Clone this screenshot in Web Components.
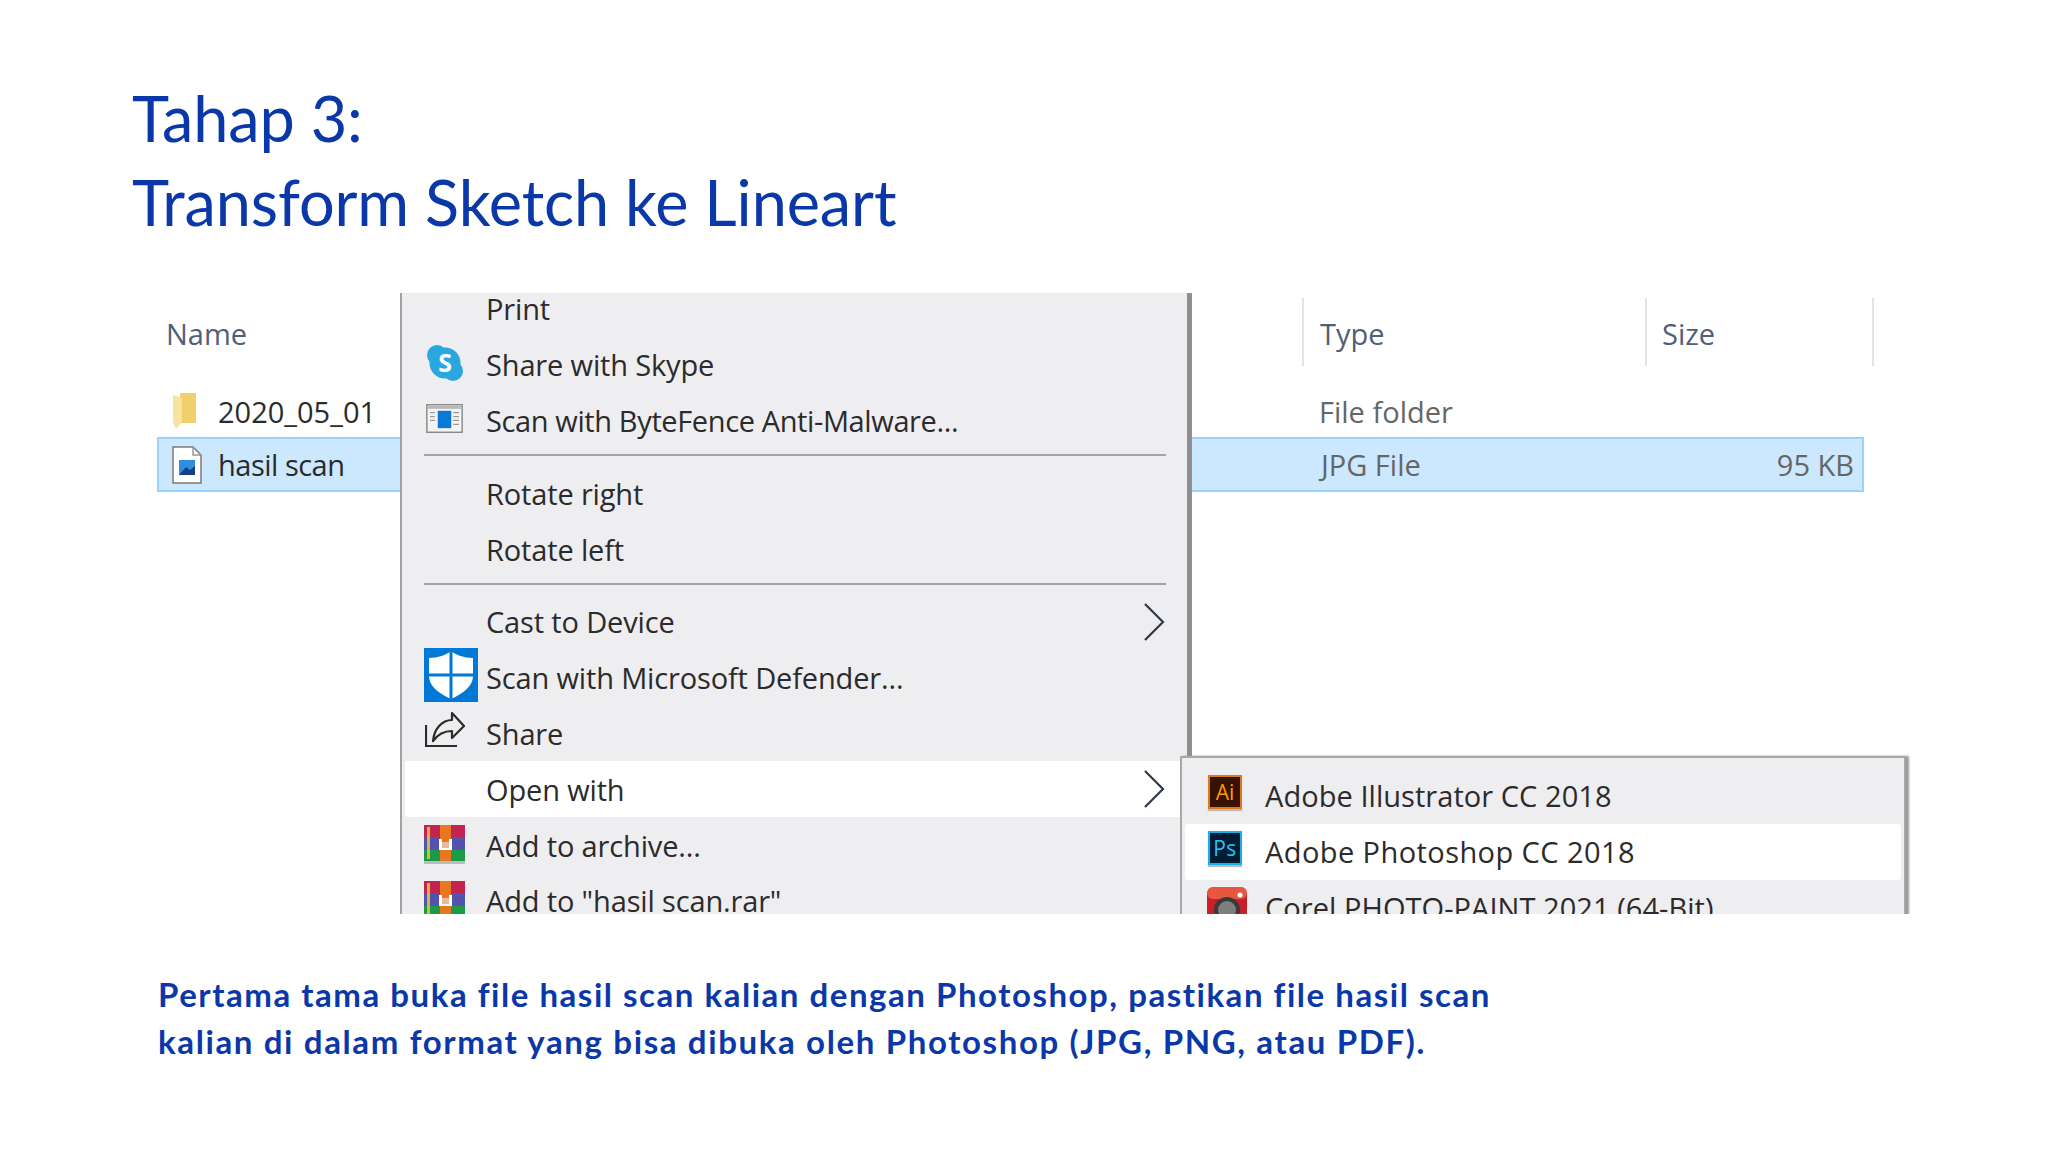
<!DOCTYPE html>
<html>
<head>
<meta charset="utf-8">
<title>Tahap 3</title>
<style>
  html, body { margin: 0; background: #fff; }
</style>
</head>
<body>
<slide-page>
  <span slot="title">Tahap 3:<br>Transform Sketch ke Lineart</span>
  <explorer-panel slot="shot">
    <context-menu>
      <menu-item>Print</menu-item>
      <menu-item icon="skype">Share with Skype</menu-item>
      <menu-item icon="bytefence" style="letter-spacing:-.38px">Scan with ByteFence Anti-Malware...</menu-item>
      <menu-sep></menu-sep>
      <menu-item>Rotate right</menu-item>
      <menu-item>Rotate left</menu-item>
      <menu-sep></menu-sep>
      <menu-item arrow>Cast to Device</menu-item>
      <menu-item icon="defender">Scan with Microsoft Defender...</menu-item>
      <menu-item icon="share">Share</menu-item>
      <menu-item arrow active>Open with</menu-item>
      <menu-item icon="rar">Add to archive...</menu-item>
      <menu-item icon="rar">Add to "hasil scan.rar"</menu-item>
    </context-menu>
    <sub-menu>
      <menu-item icon="ai" narrow>Adobe Illustrator CC 2018</menu-item>
      <menu-item icon="ps" narrow active style="letter-spacing:.42px">Adobe Photoshop CC 2018</menu-item>
      <menu-item icon="corel" narrow>Corel PHOTO-PAINT 2021 (64-Bit)</menu-item>
    </sub-menu>
  </explorer-panel>
  <span slot="body">Pertama tama buka file hasil scan kalian dengan Photoshop, pastikan file hasil scan<br><span style="letter-spacing:1.63px">kalian di dalam format yang bisa dibuka oleh Photoshop (JPG, PNG, atau PDF).</span></span>
</slide-page>

<script>
  const icons = {
    skype: `<svg style="margin:-4px 0 0 2px" width="38" height="38" viewBox="0 0 38 38"><circle cx="11" cy="11" r="10" fill="#2aa7df"/><circle cx="27" cy="27" r="10" fill="#2aa7df"/><circle cx="19" cy="19" r="15.5" fill="#2aa7df"/><text x="19" y="28" text-anchor="middle" font-family="Open Sans, sans-serif" font-weight="700" font-size="25" fill="#fff">S</text></svg>`,
    bytefence: `<svg style="margin:-4px 0 0 2px" width="37" height="29" viewBox="0 0 38 30"><rect x=".75" y=".75" width="36.5" height="28.5" fill="#f4f4f4" stroke="#8a8a8a" stroke-width="1.5"/><rect x="2" y="2" width="34" height="3" fill="#b8b8b8"/><rect x="12" y="7" width="14" height="18" fill="#0a78d6"/><path d="M4 9h5M4 13h5M4 17h5M28 9h6M28 13h6M28 17h6M28 21h6" stroke="#9a9a9a" stroke-width="1.3"/></svg>`,
    defender: `<svg style="margin:-6px 0 0 0" width="54" height="54" viewBox="0 0 54 54"><rect width="54" height="54" fill="#0078d7"/><path d="M27 3c5 4 13 7 22 7v18c0 10-9 17-22 23C14 45 5 38 5 28V10c9 0 17-3 22-7z" fill="#fff"/><path d="M27 2v50M4 27h46" stroke="#0078d7" stroke-width="3"/></svg>`,
    share: `<svg style="margin:-8px 0 0 1px" width="41" height="37" viewBox="0 0 41 37" fill="none" stroke="#2b2b2b" stroke-width="2.2"><path d="M1 14v21h31"/><path d="M8 30C9 18 17 9 27 9V2l12 13-12 12v-7c-8 0-14 3-19 10z" stroke-linejoin="round"/></svg>`,
    rar: `<svg width="41" height="40" viewBox="0 0 41 40"><rect y="36" width="41" height="3" fill="#bcbcbc"/><rect width="41" height="12" fill="#c2234f"/><rect y="12" width="41" height="13" fill="#5353ad"/><rect y="25" width="41" height="11" fill="#1d9a48"/><rect x="16" width="11" height="36" fill="#e8781f"/><rect x="3" y="2" width="3" height="32" fill="#e5c93a" opacity=".85"/><path d="M15 14h3v9h7v-9h3v11H15z" fill="#fff"/><rect x="18" y="17" width="7" height="6" fill="#e9b9a0"/></svg>`,
    ai: `<div class="adobe" style="background:#361300;border-color:#e07a10;color:#ff9a00">Ai</div>`,
    ps: `<div class="adobe" style="background:#001d33;border-color:#18b0e8;color:#2fc0f5">Ps</div>`,
    corel: `<svg width="40" height="40" viewBox="0 0 40 40"><rect width="40" height="40" rx="7" fill="#c8202a"/><rect width="40" height="12" rx="6" fill="#e8563f"/><circle cx="20" cy="23" r="13" fill="#3a3a3a"/><circle cx="20" cy="23" r="9" fill="#7e7e7e"/><circle cx="33" cy="8" r="2.5" fill="#fff"/></svg>`,
    folder: `<svg width="24" height="36" viewBox="0 0 24 36"><path d="M7 0h16v30H7z" fill="#f1cf6c"/><path d="M0 2l9 3v24l-6 7-3-6z" fill="#f8e4a0"/></svg>`,
    image: `<svg width="30" height="38" viewBox="0 0 30 38"><path d="M1 1h20l8 8v28H1z" fill="#fff" stroke="#7a7a7a" stroke-width="1.5"/><path d="M21 1v8h8" fill="none" stroke="#9a9a9a" stroke-width="1.5"/><rect x="7" y="14" width="16" height="15" fill="#2f8fdc"/><path d="M7 29l7-8 4 3 5-4v9z" fill="#173f86"/></svg>`
  };

  class SlidePage extends HTMLElement {
    connectedCallback() {
      this.attachShadow({ mode: "open" }).innerHTML = `
        <style>
          :host { display: block; width: 2048px; height: 1152px; box-sizing: border-box; padding: 76px 0 0 132px; color: #0a38a8; font-family: Lato, "Liberation Sans", sans-serif; overflow: hidden; }
          h1 { margin: 0; font-weight: 400; font-size: 63px; line-height: 84px; letter-spacing: -0.1px; }
          .shot { margin: 49px 0 0 25px; }
          p { margin: 57px 0 0 26px; font-weight: 700; font-size: 33px; line-height: 47px; letter-spacing: 1.53px; white-space: nowrap; }
        </style>
        <h1><slot name="title"></slot></h1>
        <div class="shot"><slot name="shot"></slot></div>
        <p><slot name="body"></slot></p>`;
    }
  }

  class ExplorerPanel extends HTMLElement {
    connectedCallback() {
      this.attachShadow({ mode: "open" }).innerHTML = `
        <style>
          :host { display: block; position: relative; width: 1760px; height: 621px; overflow: hidden; font-family: "Open Sans", sans-serif; font-size: 29px; }
          .head { display: grid; grid-template-columns: 1147px 343px 227px; height: 68px; margin-top: 5px; color: #4f6078; }
          .head div { display: flex; align-items: center; padding: 3px 0 0 16px; box-sizing: border-box; border-right: 2px solid #e4e4e4; }
          .head div:first-child { padding-left: 9px; }
          .head div:last-child { padding-left: 15px; }
          .row { display: grid; grid-template-columns: 59px 1103px 343px 1fr; align-items: center; box-sizing: border-box; width: 1707px; color: #2b2b2b; }
          .row .t { color: #666; }
          .row .s { color: #666; text-align: right; padding-right: 8px; }
          .folder { margin-top: 19px; height: 52px; }
          .folder .n { padding-left: 2px; }
          .sel { height: 55px; background: #cce8ff; border: 2px solid #99d1ff; }
          .sel .n { letter-spacing: -0.5px; }
          .ic { display: flex; justify-content: center; padding-right: 4px; }
        </style>
        <div class="head"><div>Name</div><div>Type</div><div>Size</div></div>
        <div class="row folder"><div class="ic"><app-icon name="folder"></app-icon></div><div class="n">2020_05_01</div><div class="t">File folder</div><div></div></div>
        <div class="row sel"><div class="ic"><app-icon name="image"></app-icon></div><div class="n">hasil scan</div><div class="t">JPG File</div><div class="s">95 KB</div></div>
        <slot></slot>`;
    }
  }

  class ContextMenu extends HTMLElement {
    connectedCallback() {
      this.attachShadow({ mode: "open" }).innerHTML = `
        <style>
          :host { display: block; position: absolute; left: 243px; top: 0; width: 792px; height: 621px; box-sizing: border-box; background: #eeedf0; border-left: 2px solid #a2a2a2; border-right: 5px solid #8f8f8f; overflow: hidden; }
          .list { margin-top: -12px; }
        </style>
        <div class="list"><slot></slot></div>`;
    }
  }

  class SubMenu extends HTMLElement {
    connectedCallback() {
      this.attachShadow({ mode: "open" }).innerHTML = `
        <style>
          :host { display: block; position: absolute; left: 1023px; top: 463px; width: 726px; height: 170px; box-sizing: border-box; background: #eeedf0; border-top: 2px solid #a8a8a8; border-left: 2px solid #a8a8a8; border-right: 2px solid #a8a8a8; box-shadow: 3px 0 2px #9a9a9a; padding: 10px 3px 0; }
        </style>
        <slot></slot>`;
    }
  }

  class MenuItem extends HTMLElement {
    connectedCallback() {
      const name = this.getAttribute("icon");
      this.attachShadow({ mode: "open" }).innerHTML = `
        <style>
          :host { display: flex; align-items: center; position: relative; height: 55.8px; margin-left: 3px; color: #2b2b2b; font-size: 29px; letter-spacing: -0.15px; white-space: nowrap; }
          :host([active]) { background: #fff; border-radius: 3px; }
          :host([narrow]) { margin-left: 0; letter-spacing: 0.05px; }
          .ic { width: 81px; flex: none; box-sizing: border-box; padding-left: 19px; display: flex; align-items: center; }
          :host([narrow]) .ic { width: 80px; padding-left: 23px; }
          :host([narrow]) app-icon { margin-top: -7px; }
          :host([icon="corel"]) app-icon { margin-top: 0; margin-left: -1px; }
          svg.chev { position: absolute; right: 22px; top: 9px; }
        </style>
        <div class="ic">${name ? `<app-icon name="${name}"></app-icon>` : ""}</div>
        <slot></slot>
        ${this.hasAttribute("arrow") ? `<svg class="chev" width="22" height="38" viewBox="0 0 22 38" fill="none" stroke="#2b3a4a" stroke-width="2.2"><path d="M2 1l18 18L2 37"/></svg>` : ""}`;
    }
  }

  class MenuSep extends HTMLElement {
    connectedCallback() {
      this.attachShadow({ mode: "open" }).innerHTML = `
        <style>
          :host { display: block; box-sizing: border-box; height: 17px; padding-top: 6px; margin: 0 21px 0 22px; }
          div { height: 2px; background: #a4a4a4; }
        </style>
        <div></div>`;
    }
  }

  class AppIcon extends HTMLElement {
    connectedCallback() {
      this.attachShadow({ mode: "open" }).innerHTML = `
        <style>
          :host { display: flex; }
          .adobe { width: 34px; height: 34px; box-sizing: border-box; border: 2px solid; display: flex; align-items: center; justify-content: center; font: 400 21px "Open Sans", sans-serif; box-shadow: 0 2px 1px #bbb; }
        </style>
        ${icons[this.getAttribute("name")] || ""}`;
    }
  }

  customElements.define("app-icon", AppIcon);
  customElements.define("menu-sep", MenuSep);
  customElements.define("menu-item", MenuItem);
  customElements.define("sub-menu", SubMenu);
  customElements.define("context-menu", ContextMenu);
  customElements.define("explorer-panel", ExplorerPanel);
  customElements.define("slide-page", SlidePage);
</script>
</body>
</html>
